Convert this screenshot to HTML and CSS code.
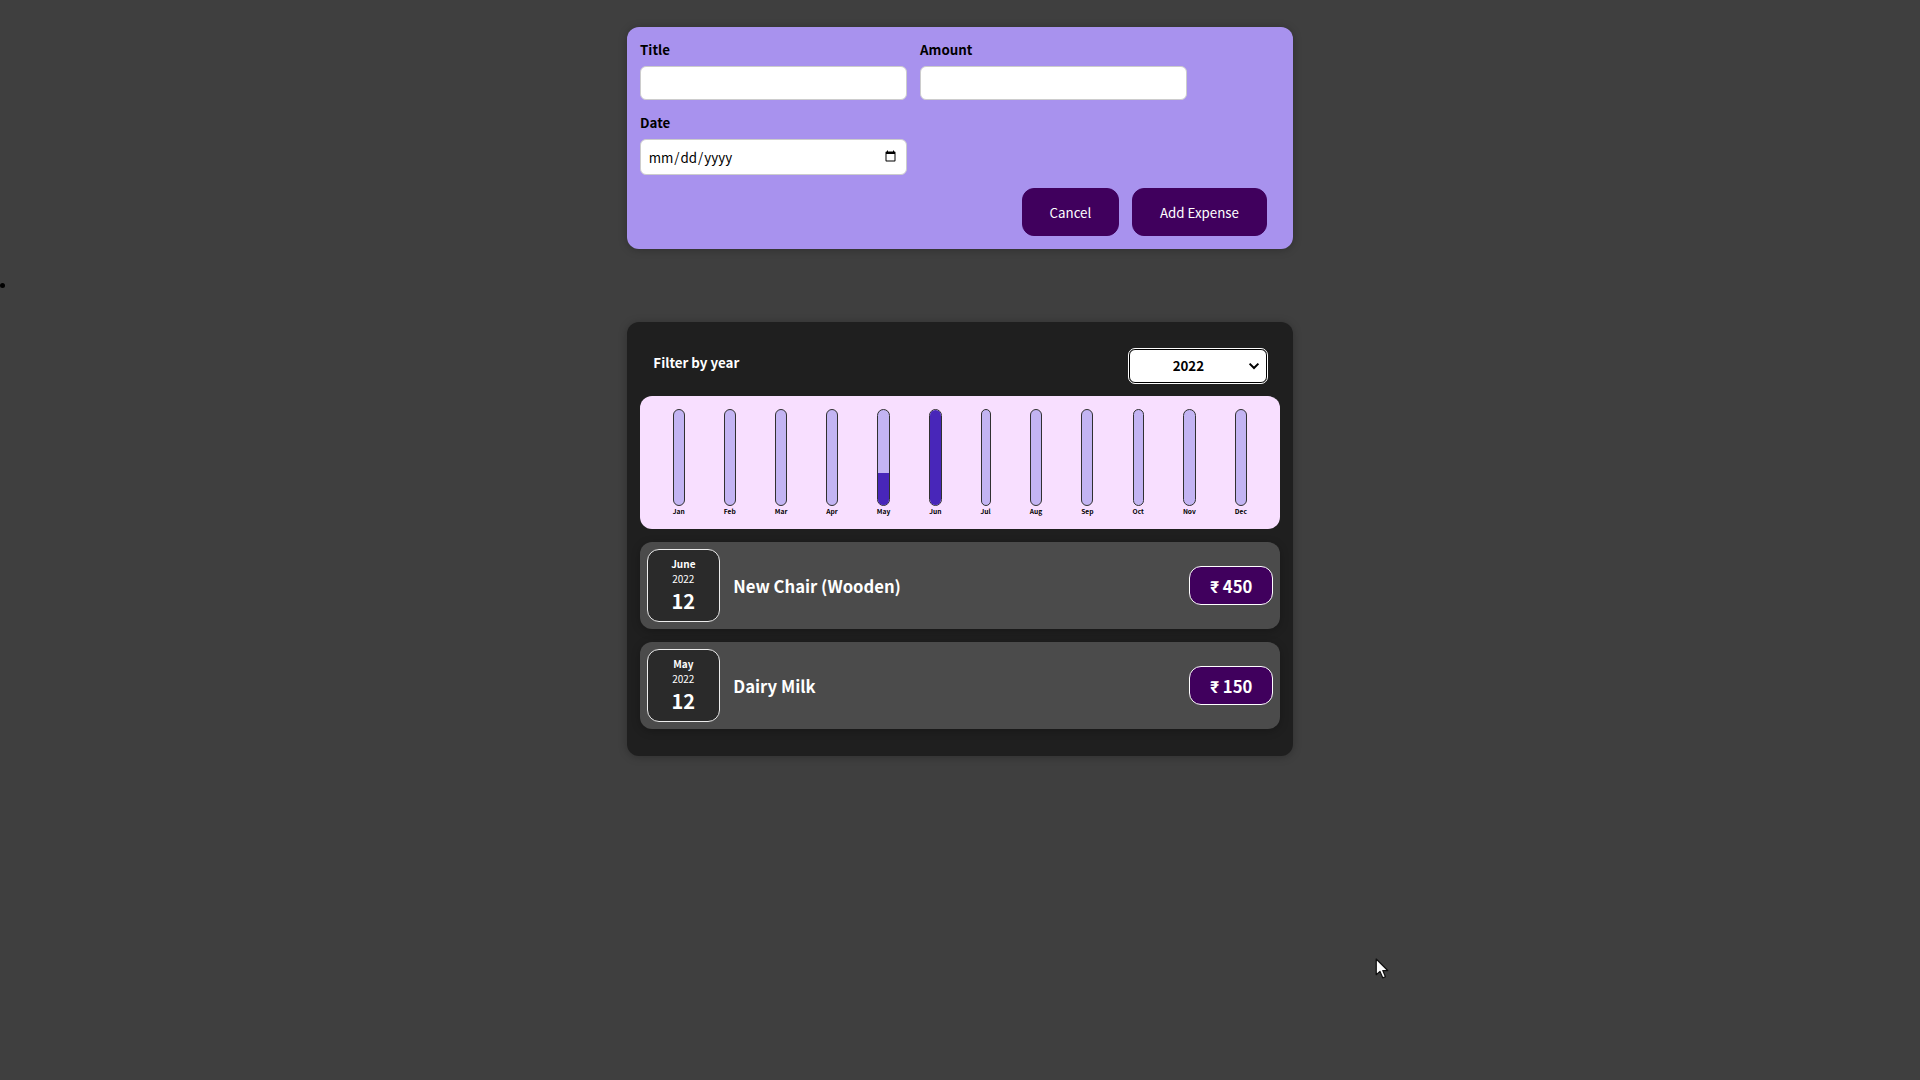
FILE: index.html
```html
<!DOCTYPE html>
<html lang="en">

<head>
    <meta charset="UTF-8">
    <meta name="viewport" content="width=device-width, initial-scale=1.0">
    <title>Expenses</title>
    <link rel="stylesheet" href="styles.css">
</head>

<body>
    <div class="new-expense">
        <form>
            <div class="new-expense-controls">
                <div class="new-expense-control">
                    <label for="title">Title</label>
                    <input type="text" id="title">
                </div>
                <div class="new-expense-control">
                    <label for="amount">Amount</label>
                    <input type="number" id="amount">
                </div>
                <div class="new-expense-control">
                    <label for="date">Date</label>
                    <input type="date" id="date">
                </div>
            </div>
            <div class="new-expense-actions">
                <button type="button">Cancel</button>
                <button type="submit">Add Expense</button>
            </div>
        </form>
    </div>

    <ul class="stray-list">
        <li></li>
    </ul>

    <div class="expenses">
        <div class="expenses-filter">
            <label for="year">Filter by year</label>
            <div class="select-wrap">
                <select id="year">
                    <option>2022</option>
                    <option>2021</option>
                    <option>2020</option>
                    <option>2019</option>
                </select>
                <svg class="select-arrow" width="12" height="8" viewBox="0 0 12 8">
                    <path d="M1.6 1.6 L6 6 L10.4 1.6" fill="none" stroke="#000" stroke-width="2"/>
                </svg>
            </div>
        </div>

        <div class="chart">
            <div class="chart-bar">
                <div class="chart-bar-inner"><div class="chart-bar-fill" style="height: 0%"></div></div>
                <div class="chart-bar-label">Jan</div>
            </div>
            <div class="chart-bar">
                <div class="chart-bar-inner"><div class="chart-bar-fill" style="height: 0%"></div></div>
                <div class="chart-bar-label">Feb</div>
            </div>
            <div class="chart-bar">
                <div class="chart-bar-inner"><div class="chart-bar-fill" style="height: 0%"></div></div>
                <div class="chart-bar-label">Mar</div>
            </div>
            <div class="chart-bar">
                <div class="chart-bar-inner"><div class="chart-bar-fill" style="height: 0%"></div></div>
                <div class="chart-bar-label">Apr</div>
            </div>
            <div class="chart-bar">
                <div class="chart-bar-inner"><div class="chart-bar-fill" style="height: 33.33%"></div></div>
                <div class="chart-bar-label">May</div>
            </div>
            <div class="chart-bar">
                <div class="chart-bar-inner"><div class="chart-bar-fill" style="height: 100%"></div></div>
                <div class="chart-bar-label">Jun</div>
            </div>
            <div class="chart-bar">
                <div class="chart-bar-inner"><div class="chart-bar-fill" style="height: 0%"></div></div>
                <div class="chart-bar-label">Jul</div>
            </div>
            <div class="chart-bar">
                <div class="chart-bar-inner"><div class="chart-bar-fill" style="height: 0%"></div></div>
                <div class="chart-bar-label">Aug</div>
            </div>
            <div class="chart-bar">
                <div class="chart-bar-inner"><div class="chart-bar-fill" style="height: 0%"></div></div>
                <div class="chart-bar-label">Sep</div>
            </div>
            <div class="chart-bar">
                <div class="chart-bar-inner"><div class="chart-bar-fill" style="height: 0%"></div></div>
                <div class="chart-bar-label">Oct</div>
            </div>
            <div class="chart-bar">
                <div class="chart-bar-inner"><div class="chart-bar-fill" style="height: 0%"></div></div>
                <div class="chart-bar-label">Nov</div>
            </div>
            <div class="chart-bar">
                <div class="chart-bar-inner"><div class="chart-bar-fill" style="height: 0%"></div></div>
                <div class="chart-bar-label">Dec</div>
            </div>
        </div>

        <div class="expense-item">
            <div class="expense-date">
                <div class="expense-date-month">June</div>
                <div class="expense-date-year">2022</div>
                <div class="expense-date-day">12</div>
            </div>
            <h2>New Chair (Wooden)</h2>
            <div class="expense-price">₹ 450</div>
        </div>
        <div class="expense-item">
            <div class="expense-date">
                <div class="expense-date-month">May</div>
                <div class="expense-date-year">2022</div>
                <div class="expense-date-day">12</div>
            </div>
            <h2>Dairy Milk</h2>
            <div class="expense-price">₹ 150</div>
        </div>
    </div>

    <!-- mouse pointer caught in the screenshot -->
    <svg class="pointer" width="15" height="23" viewBox="0 0 14 22">
        <path d="M1 1 L1 16 L4.6 12.8 L7.2 19 L9.8 17.9 L7.3 12 L12 12 Z" fill="#fff" stroke="#111" stroke-width="1.2" stroke-linejoin="round"/>
    </svg>
</body>

</html>
```

FILE: styles.css
```css
* {
    box-sizing: border-box;
}

html {
    font-family: "Noto Sans CJK JP", Roboto, sans-serif;
    font-size: 13.333px;
}

body {
    margin: 0;
    background-color: #3f3f3f;
}

/* Formulir */
.new-expense {
    background-color: #a892ee;
    padding: 1rem;
    margin: 2rem auto calc(2rem + 0.6px);
    width: 50rem;
    border-radius: 12px;
    box-shadow: 0 1px 8px rgba(0, 0, 0, 0.25);
}

.new-expense-controls {
    display: flex;
    flex-wrap: wrap;
    gap: 1rem;
    margin-bottom: 12.7px;
}

.new-expense-control label {
    display: block;
    font-weight: bold;
    margin-bottom: 0.5rem;
}

.new-expense-control input {
    display: block;
    font: inherit;
    padding: 0.5rem;
    border-radius: 6px;
    border: 1px solid #ccc;
    width: 20rem;
    max-width: 100%;
}

.new-expense-actions {
    display: flex;
    justify-content: flex-end;
    gap: 1rem;
    padding-right: 1rem;
}

.new-expense-actions button {
    font: inherit;
    cursor: pointer;
    padding: calc(1rem + 0.5px) 2rem calc(1rem - 0.5px);
    border: 1px solid #40005d;
    background-color: #40005d;
    color: white;
    border-radius: 12px;
}

.stray-list {
    margin: 0;
    padding: 0;
    list-style-position: inside;
    color: black;
}

/* Daftar pengeluaran */
.expenses {
    padding: 1rem;
    background-color: #1f1f1f;
    margin: 2rem auto;
    width: 50rem;
    border-radius: 12px;
    box-shadow: 0 1px 8px rgba(0, 0, 0, 0.25);
}

.expenses-filter {
    display: flex;
    align-items: center;
    justify-content: space-between;
    margin: 1rem 0;
    padding: 0 1rem;
    color: white;
}

.expenses-filter label {
    font-weight: bold;
    margin-bottom: 0.5rem;
}

.select-wrap {
    position: relative;
    display: flex;
}

.expenses-filter select {
    appearance: none;
    font: inherit;
    font-weight: bold;
    width: 137.7px;
    height: 34px;
    padding: 0 0 0 3.2rem;
    border: 1px solid black;
    border-radius: 6px;
    background-color: white;
    outline: 1px solid white;
}

.select-arrow {
    position: absolute;
    right: 6.5px;
    top: 13px;
    pointer-events: none;
}

.chart {
    display: flex;
    justify-content: space-around;
    padding: 1rem;
    height: 10rem;
    border-radius: 12px;
    background-color: #f8dfff;
    text-align: center;
}

.chart-bar {
    display: flex;
    flex-direction: column;
    align-items: center;
    height: 100%;
}

.chart-bar-inner {
    display: flex;
    flex-direction: column;
    justify-content: flex-end;
    flex: 1;
    width: 100%;
    border: 1px solid #313131;
    border-radius: 12px;
    background-color: #c3b4f3;
    overflow: hidden;
}

.chart-bar-fill {
    width: 100%;
    background-color: #4826b9;
}

.chart-bar-label {
    font-size: 0.5rem;
    font-weight: bold;
}

.expense-item {
    display: flex;
    align-items: center;
    justify-content: space-between;
    padding: 0.5rem;
    margin: 1rem 0;
    border-radius: 12px;
    background-color: #4b4b4b;
    box-shadow: 0 2px 8px rgba(0, 0, 0, 0.25);
}

.expense-date {
    display: flex;
    flex-direction: column;
    align-items: center;
    justify-content: center;
    width: 5.5rem;
    height: 5.5rem;
    border: 1px solid #ececec;
    border-radius: 12px;
    background-color: #2a2a2a;
    color: white;
}

.expense-date-month {
    font-size: 0.75rem;
    font-weight: bold;
}

.expense-date-year {
    font-size: 0.75rem;
}

.expense-date-day {
    font-size: 1.5rem;
    font-weight: bold;
}

.expense-item h2 {
    flex: 1;
    margin: 0 1rem;
    font-size: 1.25rem;
    color: white;
}

.expense-price {
    font-size: 1.25rem;
    font-weight: bold;
    color: white;
    background-color: #40005d;
    border: 1px solid white;
    padding: 0.5rem 1.5rem;
    border-radius: 12px;
}

.pointer {
    position: absolute;
    left: 1375px;
    top: 958px;
}
```
